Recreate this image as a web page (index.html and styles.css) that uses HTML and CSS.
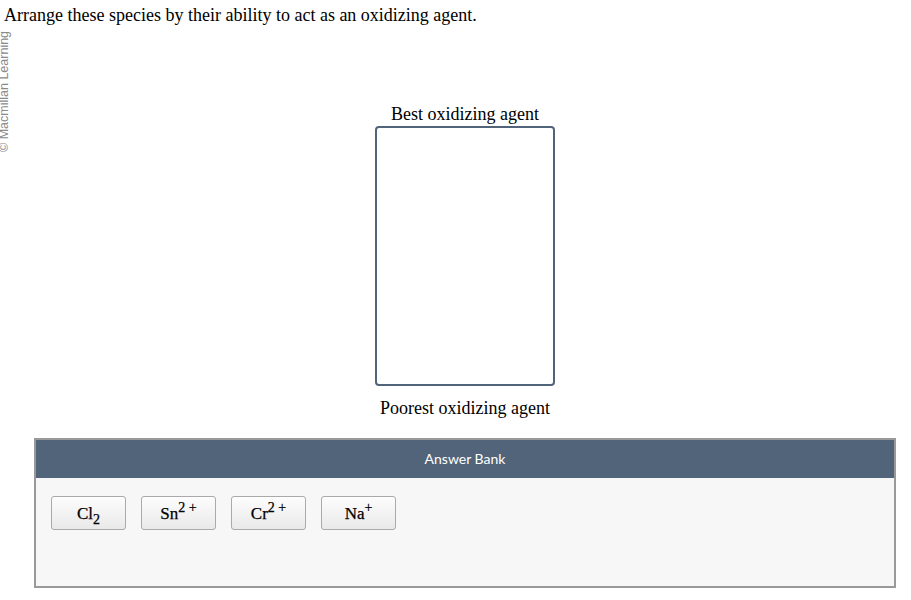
FILE: index.html
```html
<!DOCTYPE html>
<html lang="en">
<head>
<meta charset="utf-8">
<title>Arrange species</title>
<link rel="stylesheet" href="styles.css">
</head>
<body>
<div class="watermark">© Macmillan Learning</div>
<p class="prompt">Arrange these species by their ability to act as an oxidizing agent.</p>
<div class="activity">
  <div class="rank">
    <div class="rank-label rank-top">Best oxidizing agent</div>
    <div class="dropzone"></div>
    <div class="rank-label rank-bottom">Poorest oxidizing agent</div>
  </div>
  <div class="bank">
    <div class="bank-header">Answer Bank</div>
    <div class="bank-body">
      <div class="chip">Cl<sub>2</sub></div>
      <div class="chip">Sn<sup>2 +</sup></div>
      <div class="chip">Cr<sup>2 +</sup></div>
      <div class="chip">Na<sup>+</sup></div>
    </div>
  </div>
</div>
</body>
</html>
```
FILE: styles.css
```css
html, body {
  margin: 0;
  padding: 0;
  background: #fff;
}
body {
  font-family: "Liberation Serif", "Times New Roman", serif;
  color: #000;
  position: relative;
  width: 911px;
  height: 600px;
  overflow: hidden;
}
.watermark {
  position: absolute;
  left: 0;
  top: 152px;
  transform-origin: 0 0;
  transform: rotate(-90deg);
  font-family: "Liberation Sans", Arial, sans-serif;
  font-size: 12.5px;
  line-height: 9px;
  color: #8a8a8a;
  white-space: nowrap;
}
.prompt {
  margin: 0;
  padding: 5px 0 0 4px;
  font-size: 18px;
  line-height: 20px;
}
.activity {
  margin-left: 34px;
  width: 862px;
}
.rank {
  display: flex;
  flex-direction: column;
  align-items: center;
  padding-top: 79px;
}
.rank-label {
  font-size: 18px;
  line-height: 20px;
}
.rank-top {
  margin-bottom: 2px;
}
.dropzone {
  width: 176px;
  height: 256px;
  border: 2px solid #52647a;
  border-radius: 4px;
}
.rank-bottom {
  margin-top: 12px;
}
.bank {
  margin-top: 20px;
  border: 2px solid #999;
}
.bank-header {
  height: 38px;
  background: #52647a;
  color: #fff;
  font-family: Lato, "Noto Sans", sans-serif;
  font-size: 14px;
  line-height: 38px;
  text-align: center;
}
.bank-body {
  background: #f7f7f7;
  height: 108px;
  box-sizing: border-box;
  padding: 18px 15px 0;
  display: flex;
  align-items: flex-start;
  gap: 15px;
}
.chip {
  width: 75px;
  height: 34px;
  box-sizing: border-box;
  border: 1px solid #aaa;
  border-radius: 3px;
  background: linear-gradient(#fdfdfd, #e9e9e9);
  font-size: 17px;
  line-height: 33px;
  text-align: center;
  -webkit-text-stroke: 0.25px #000;
}
.chip sub, .chip sup {
  font-size: 14px;
  line-height: 0;
}
.chip sub {
  vertical-align: -5px;
}
.chip sup {
  vertical-align: 7px;
}
```
